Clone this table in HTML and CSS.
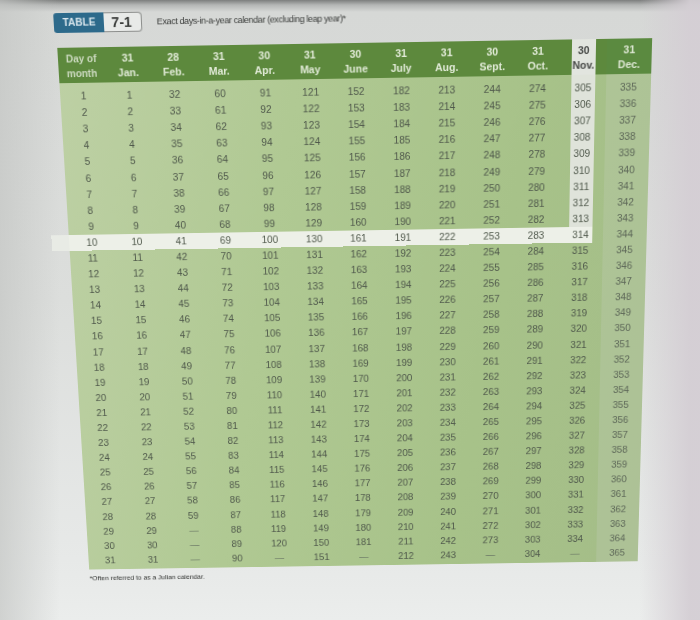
FILE: index.html
```html
<!DOCTYPE html>
<html lang="en">
<head>
<meta charset="utf-8">
<title>Table 7-1 Exact days-in-a-year calendar</title>
<link rel="stylesheet" href="styles.css">
</head>
<body>
<div class="sheet">
  <div class="caption">
    <div class="badge"><span class="badge-label">TABLE</span><span class="badge-num">7-1</span></div>
    <div class="title">Exact days-in-a-year calendar (excluding leap year)*</div>
  </div>
  <table class="cal">
    <colgroup><col class="c-day"><col class="c-m"><col class="c-m"><col class="c-m"><col class="c-m"><col class="c-m"><col class="c-m"><col class="c-m"><col class="c-m"><col class="c-m"><col class="c-m"><col class="c-m"><col class="c-m"></colgroup>
    <thead>
      <tr>
        <th class="day">Day of<br>month</th>
        <th>31<br>Jan.</th><th>28<br>Feb.</th><th>31<br>Mar.</th><th>30<br>Apr.</th><th>31<br>May</th><th>30<br>June</th>
        <th>31<br>July</th><th>31<br>Aug.</th><th>30<br>Sept.</th><th>31<br>Oct.</th><th class="nov">30<br>Nov.</th><th class="dec">31<br>Dec.</th>
      </tr>
    </thead>
    <tbody>
      <tr class="top first"><td>1</td><td>1</td><td>32</td><td>60</td><td>91</td><td>121</td><td>152</td><td>182</td><td>213</td><td>244</td><td>274</td><td>305</td><td>335</td></tr>
      <tr class="top"><td>2</td><td>2</td><td>33</td><td>61</td><td>92</td><td>122</td><td>153</td><td>183</td><td>214</td><td>245</td><td>275</td><td>306</td><td>336</td></tr>
      <tr class="top"><td>3</td><td>3</td><td>34</td><td>62</td><td>93</td><td>123</td><td>154</td><td>184</td><td>215</td><td>246</td><td>276</td><td>307</td><td>337</td></tr>
      <tr class="top"><td>4</td><td>4</td><td>35</td><td>63</td><td>94</td><td>124</td><td>155</td><td>185</td><td>216</td><td>247</td><td>277</td><td>308</td><td>338</td></tr>
      <tr class="top"><td>5</td><td>5</td><td>36</td><td>64</td><td>95</td><td>125</td><td>156</td><td>186</td><td>217</td><td>248</td><td>278</td><td>309</td><td>339</td></tr>
      <tr class="top"><td>6</td><td>6</td><td>37</td><td>65</td><td>96</td><td>126</td><td>157</td><td>187</td><td>218</td><td>249</td><td>279</td><td>310</td><td>340</td></tr>
      <tr class="top"><td>7</td><td>7</td><td>38</td><td>66</td><td>97</td><td>127</td><td>158</td><td>188</td><td>219</td><td>250</td><td>280</td><td>311</td><td>341</td></tr>
      <tr class="top"><td>8</td><td>8</td><td>39</td><td>67</td><td>98</td><td>128</td><td>159</td><td>189</td><td>220</td><td>251</td><td>281</td><td>312</td><td>342</td></tr>
      <tr class="top"><td>9</td><td>9</td><td>40</td><td>68</td><td>99</td><td>129</td><td>160</td><td>190</td><td>221</td><td>252</td><td>282</td><td>313</td><td>343</td></tr>
      <tr class="hl"><td>10</td><td>10</td><td>41</td><td>69</td><td>100</td><td>130</td><td>161</td><td>191</td><td>222</td><td>253</td><td>283</td><td>314</td><td>344</td></tr>
      <tr><td>11</td><td>11</td><td>42</td><td>70</td><td>101</td><td>131</td><td>162</td><td>192</td><td>223</td><td>254</td><td>284</td><td>315</td><td>345</td></tr>
      <tr><td>12</td><td>12</td><td>43</td><td>71</td><td>102</td><td>132</td><td>163</td><td>193</td><td>224</td><td>255</td><td>285</td><td>316</td><td>346</td></tr>
      <tr><td>13</td><td>13</td><td>44</td><td>72</td><td>103</td><td>133</td><td>164</td><td>194</td><td>225</td><td>256</td><td>286</td><td>317</td><td>347</td></tr>
      <tr><td>14</td><td>14</td><td>45</td><td>73</td><td>104</td><td>134</td><td>165</td><td>195</td><td>226</td><td>257</td><td>287</td><td>318</td><td>348</td></tr>
      <tr><td>15</td><td>15</td><td>46</td><td>74</td><td>105</td><td>135</td><td>166</td><td>196</td><td>227</td><td>258</td><td>288</td><td>319</td><td>349</td></tr>
      <tr><td>16</td><td>16</td><td>47</td><td>75</td><td>106</td><td>136</td><td>167</td><td>197</td><td>228</td><td>259</td><td>289</td><td>320</td><td>350</td></tr>
      <tr><td>17</td><td>17</td><td>48</td><td>76</td><td>107</td><td>137</td><td>168</td><td>198</td><td>229</td><td>260</td><td>290</td><td>321</td><td>351</td></tr>
      <tr><td>18</td><td>18</td><td>49</td><td>77</td><td>108</td><td>138</td><td>169</td><td>199</td><td>230</td><td>261</td><td>291</td><td>322</td><td>352</td></tr>
      <tr><td>19</td><td>19</td><td>50</td><td>78</td><td>109</td><td>139</td><td>170</td><td>200</td><td>231</td><td>262</td><td>292</td><td>323</td><td>353</td></tr>
      <tr><td>20</td><td>20</td><td>51</td><td>79</td><td>110</td><td>140</td><td>171</td><td>201</td><td>232</td><td>263</td><td>293</td><td>324</td><td>354</td></tr>
      <tr><td>21</td><td>21</td><td>52</td><td>80</td><td>111</td><td>141</td><td>172</td><td>202</td><td>233</td><td>264</td><td>294</td><td>325</td><td>355</td></tr>
      <tr><td>22</td><td>22</td><td>53</td><td>81</td><td>112</td><td>142</td><td>173</td><td>203</td><td>234</td><td>265</td><td>295</td><td>326</td><td>356</td></tr>
      <tr><td>23</td><td>23</td><td>54</td><td>82</td><td>113</td><td>143</td><td>174</td><td>204</td><td>235</td><td>266</td><td>296</td><td>327</td><td>357</td></tr>
      <tr><td>24</td><td>24</td><td>55</td><td>83</td><td>114</td><td>144</td><td>175</td><td>205</td><td>236</td><td>267</td><td>297</td><td>328</td><td>358</td></tr>
      <tr><td>25</td><td>25</td><td>56</td><td>84</td><td>115</td><td>145</td><td>176</td><td>206</td><td>237</td><td>268</td><td>298</td><td>329</td><td>359</td></tr>
      <tr><td>26</td><td>26</td><td>57</td><td>85</td><td>116</td><td>146</td><td>177</td><td>207</td><td>238</td><td>269</td><td>299</td><td>330</td><td>360</td></tr>
      <tr><td>27</td><td>27</td><td>58</td><td>86</td><td>117</td><td>147</td><td>178</td><td>208</td><td>239</td><td>270</td><td>300</td><td>331</td><td>361</td></tr>
      <tr><td>28</td><td>28</td><td>59</td><td>87</td><td>118</td><td>148</td><td>179</td><td>209</td><td>240</td><td>271</td><td>301</td><td>332</td><td>362</td></tr>
      <tr><td>29</td><td>29</td><td class="dash">—</td><td>88</td><td>119</td><td>149</td><td>180</td><td>210</td><td>241</td><td>272</td><td>302</td><td>333</td><td>363</td></tr>
      <tr><td>30</td><td>30</td><td class="dash">—</td><td>89</td><td>120</td><td>150</td><td>181</td><td>211</td><td>242</td><td>273</td><td>303</td><td>334</td><td>364</td></tr>
      <tr class="last"><td>31</td><td>31</td><td class="dash">—</td><td>90</td><td class="dash">—</td><td>151</td><td class="dash">—</td><td>212</td><td>243</td><td class="dash">—</td><td>304</td><td class="dash">—</td><td>365</td></tr>
    </tbody>
  </table>
  <p class="note">*Often referred to as a Julian calendar.</p>
</div>
</body>
</html>
```
FILE: styles.css
```css
* { box-sizing: border-box; }

html, body {
  margin: 0;
  padding: 0;
}

body {
  width: 700px;
  height: 620px;
  overflow: hidden;
  font-family: "Liberation Sans", Arial, sans-serif;
  background:
    linear-gradient(90deg, rgba(196, 198, 196, 0.7) 0, rgba(200, 202, 200, 0) 60px, rgba(0, 0, 0, 0) 640px, rgba(212, 206, 212, 0.95) 690px),
    linear-gradient(180deg, #7c7e7d 0, #b4b6b5 5px, #d6d8d6 12px, #dcdedc 300px, #e7e9e8 560px, #ebedec 620px);
}

.sheet {
  margin-left: 57px;
  width: 595px;
  padding-top: 8px;
  transform-origin: 50% 43px;
  transform: perspective(1000px) rotateX(-8.5deg) rotate(-0.95deg);
}

.caption {
  display: flex;
  align-items: center;
  height: 20px;
  margin-left: -2px;
}

.badge {
  display: flex;
  height: 20px;
}

.badge-label {
  background: #2d6a8b;
  color: #dce8ee;
  font-weight: bold;
  font-size: 10px;
  line-height: 20px;
  padding: 0 8px 0 9px;
  border-radius: 3px 0 0 3px;
  letter-spacing: 0;
}

.badge-num {
  background: #e8eae8;
  border: 1px solid #8c8e8c;
  border-left: none;
  border-radius: 0 4px 4px 0;
  color: #3a3c3a;
  font-weight: bold;
  font-size: 14px;
  line-height: 18px;
  padding: 0 9px 0 8px;
}

.title {
  margin-left: 15px;
  font-size: 9px;
  color: #3b3d3b;
  letter-spacing: -0.4px;
}

.cal {
  margin-top: 15px;
  width: 595px;
  table-layout: fixed;
  border-collapse: collapse;
  background: linear-gradient(100deg, #bdd0a4 0%, #b0c993 35%, #a7c289 70%, #a4bd88 100%);
}

.c-day { width: 47px; }
.c-m { width: 45.7px; }

.cal th {
  height: 36px;
  padding: 2px 0 0;
  background: #5d893d;
  color: #e2ebd8;
  font-size: 10.5px;
  font-weight: bold;
  line-height: 15px;
  text-align: center;
  vertical-align: middle;
}

.cal th.day {
  text-align: left;
  padding-left: 8px;
  font-size: 10px;
  color: #ccdac0;
  white-space: nowrap;
}

.cal th.nov {
  color: #464846;
  background: linear-gradient(90deg, #5d893d 11px, #e2e5df 11px, #e2e5df 35px, #5d893d 35px);
}

.cal th.dec {
  color: #dfe8d5;
  background: #5b8a40;
}

.cal td {
  padding: 0;
  height: 17.1px;
  font-size: 10.2px;
  line-height: 17px;
  color: #4f584b;
  text-align: center;
  vertical-align: middle;
}

.cal td:last-child {
  color: #5c6657;
  background: rgba(200, 206, 190, 0.25);
}

.cal .first td { padding-top: 5px; height: 22.1px; }
.cal .last td { padding-bottom: 2px; height: 19.1px; }

.cal td.dash { color: #6b7765; }

.cal .top td:nth-child(12) {
  background: linear-gradient(90deg, transparent 11px, #dfe3da 11px, #dfe3da 35px, transparent 35px);
}

.cal .hl td {
  background: #edf0e8;
}

.cal .hl td:first-child {
  box-shadow: -18px 0 0 #e8ebe5;
}

.cal .hl td:nth-child(12) {
  background: linear-gradient(90deg, #edf0e8 35px, transparent 35px);
}

.cal .hl td:last-child {
  background: rgba(200, 206, 190, 0.25);
}

.note {
  margin: 6px 0 0;
  font-size: 7.3px;
  color: #2f312f;
}
```
